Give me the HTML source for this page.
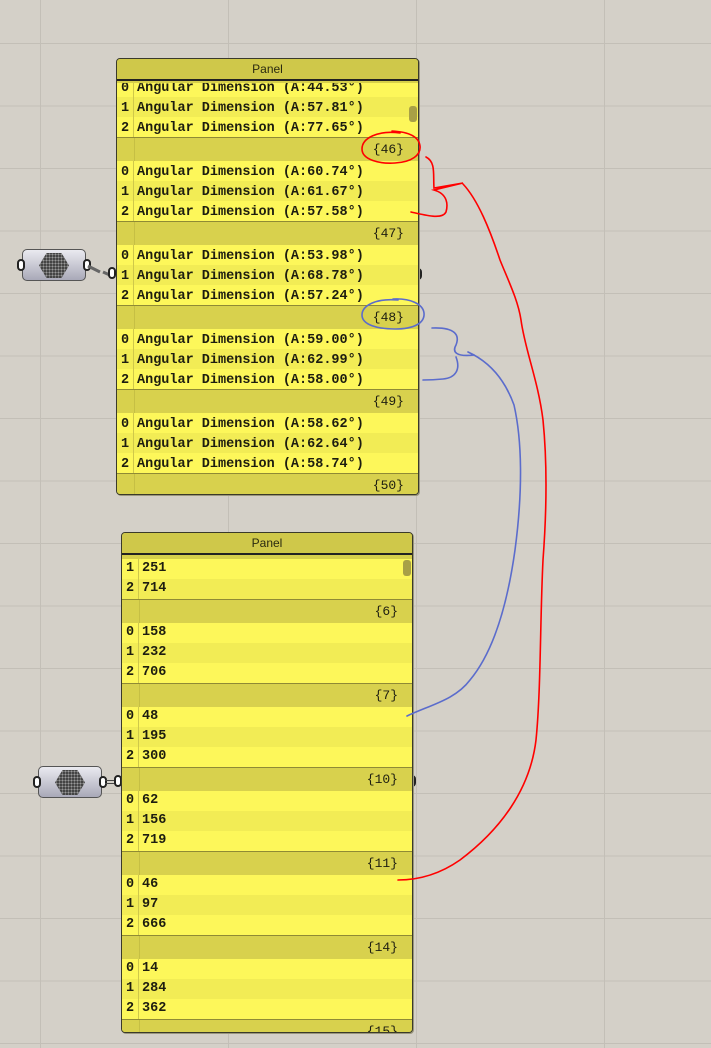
<!DOCTYPE html>
<html><head><meta charset="utf-8"><style>
*{margin:0;padding:0;box-sizing:border-box}
body{width:711px;height:1048px;overflow:hidden;background:#d4d0c8;position:relative;font-family:"Liberation Mono",monospace}
.grid{position:absolute;inset:0;background-image:linear-gradient(to right,#c3bfb7 1px,transparent 1px),linear-gradient(to bottom,#c3bfb7 1px,transparent 1px);background-size:188px 62.5px;background-position:40px 43px}
.panel{position:absolute;border:1px solid #3a3a2a;border-radius:4px;background:#d6cf4a;overflow:hidden;box-shadow:1px 1px 0 #9a967e}
.hdr{height:22px;background:#cfc84a;border-bottom:2px solid #222;font:12px "Liberation Sans",sans-serif;color:#2a2a10;text-align:center;line-height:20px}
.body{position:absolute;left:0;right:0;bottom:0;overflow:hidden}
.in{position:absolute;left:0;right:0}
.r{height:20px;line-height:20px;font-size:13.5px;font-weight:bold;color:#1d1d10;white-space:pre;display:flex}
.p1 .r{line-height:23px}
.r.a{background:#fdf75a}.r.b{background:#f2ec55}
.r i{font-style:normal;width:17px;text-align:center;border-right:1px solid #cfc84a;flex:none}
.r span{padding-left:3px}
.g{height:24px;line-height:24px;background:#d8d14d;border-top:1px solid #8f8a35;text-align:right;padding-right:14px;font-size:13px;color:#1d1d10;position:relative}
.g:before{content:"";position:absolute;left:17px;top:0;bottom:0;border-left:1px solid #c6bf44}
.sb{position:absolute;width:8px;height:16px;border-radius:3px;background:#a8a046}
.comp{position:absolute;width:64px;height:32px;border:1px solid #555;border-radius:5px;background:linear-gradient(#eaeaf0,#a9a9b8)}
.hex{position:absolute;left:16px;top:3px;width:30px;height:25px;background:#555;clip-path:polygon(25% 0,75% 0,100% 50%,75% 100%,25% 100%,0 50%);background-image:radial-gradient(#999 1px,transparent 1px);background-size:3px 3px;background-color:#444}
.port{position:absolute;width:8px;height:12px;border:2px solid #222;border-radius:6px;background:#fff}
</style></head><body>
<div class="grid"></div>

<div class="comp" style="left:22px;top:249px"><div class="hex"></div></div>
<div class="port" style="left:17px;top:259px"></div>
<div class="port" style="left:83px;top:259px"></div>
<div class="comp" style="left:38px;top:766px"><div class="hex"></div></div>
<div class="port" style="left:33px;top:776px"></div>
<div class="port" style="left:99px;top:776px"></div>
<div style="position:absolute;left:105px;top:780px;width:12px;height:4px;border-top:1px solid #444;border-bottom:1px solid #444"></div>
<svg style="position:absolute;left:0;top:0" width="711" height="1048"><path d="M88 266 L100 272 M103 272 L112 276" stroke="#666" stroke-width="3" fill="none"/></svg>
<div class="port" style="left:108px;top:267px"></div>
<div class="port" style="left:414px;top:268px"></div>
<div class="port" style="left:114px;top:775px"></div>
<div class="port" style="left:408px;top:775px"></div>

<div class="panel p1" style="left:116px;top:58px;width:303px;height:437px">
<div class="hdr">Panel</div>
<div class="body" style="top:24px"><div class="in" style="top:-6px">
<div class="r a"><i>0</i><span>Angular Dimension (A:44.53°)</span></div>
<div class="r b"><i>1</i><span>Angular Dimension (A:57.81°)</span></div>
<div class="r a"><i>2</i><span>Angular Dimension (A:77.65°)</span></div>
<div class="g">{46}</div>
<div class="r a"><i>0</i><span>Angular Dimension (A:60.74°)</span></div>
<div class="r b"><i>1</i><span>Angular Dimension (A:61.67°)</span></div>
<div class="r a"><i>2</i><span>Angular Dimension (A:57.58°)</span></div>
<div class="g">{47}</div>
<div class="r a"><i>0</i><span>Angular Dimension (A:53.98°)</span></div>
<div class="r b"><i>1</i><span>Angular Dimension (A:68.78°)</span></div>
<div class="r a"><i>2</i><span>Angular Dimension (A:57.24°)</span></div>
<div class="g">{48}</div>
<div class="r a"><i>0</i><span>Angular Dimension (A:59.00°)</span></div>
<div class="r b"><i>1</i><span>Angular Dimension (A:62.99°)</span></div>
<div class="r a"><i>2</i><span>Angular Dimension (A:58.00°)</span></div>
<div class="g">{49}</div>
<div class="r a"><i>0</i><span>Angular Dimension (A:58.62°)</span></div>
<div class="r b"><i>1</i><span>Angular Dimension (A:62.64°)</span></div>
<div class="r a"><i>2</i><span>Angular Dimension (A:58.74°)</span></div>
<div class="g">{50}</div>
</div></div>
<div class="sb" style="left:292px;top:47px"></div>
</div>

<div class="panel" style="left:121px;top:532px;width:292px;height:501px">
<div class="hdr">Panel</div>
<div class="body" style="top:24px"><div class="in" style="top:2px">
<div class="r a"><i>1</i><span>251</span></div>
<div class="r b"><i>2</i><span>714</span></div>
<div class="g">{6}</div>
<div class="r a"><i>0</i><span>158</span></div>
<div class="r b"><i>1</i><span>232</span></div>
<div class="r a"><i>2</i><span>706</span></div>
<div class="g">{7}</div>
<div class="r a"><i>0</i><span>48</span></div>
<div class="r b"><i>1</i><span>195</span></div>
<div class="r a"><i>2</i><span>300</span></div>
<div class="g">{10}</div>
<div class="r a"><i>0</i><span>62</span></div>
<div class="r b"><i>1</i><span>156</span></div>
<div class="r a"><i>2</i><span>719</span></div>
<div class="g">{11}</div>
<div class="r a"><i>0</i><span>46</span></div>
<div class="r b"><i>1</i><span>97</span></div>
<div class="r a"><i>2</i><span>666</span></div>
<div class="g">{14}</div>
<div class="r a"><i>0</i><span>14</span></div>
<div class="r b"><i>1</i><span>284</span></div>
<div class="r a"><i>2</i><span>362</span></div>
<div class="g">{15}</div>
</div></div>
<div class="sb" style="left:281px;top:27px"></div>
</div>

<svg style="position:absolute;left:0;top:0" width="711" height="1048" fill="none" stroke-width="1.6" stroke-linecap="round">
<g stroke="#f00">
<path d="M400 133 C378 130 362 138 362 149 C362 160 380 164 395 163 C412 162 421 155 420 146 C419 137 410 132 392 131"/>
<path d="M426 157 C436 162 433 175 434 188 L463 183 L434 190 C448 194 448 205 446 212 C442 220 425 215 411 212"/>
<path d="M463 184 C478 200 490 230 500 260 C508 280 518 300 521 320 C525 350 538 380 543 420 C548 470 546 520 543 560 C540 620 541 690 536 740 C530 790 500 830 460 860 C440 874 420 880 398 880"/>
</g>
<g stroke="#5b6ccc">
<path d="M398 300 C375 298 362 306 362 315 C362 325 378 329 395 329 C414 329 425 323 424 313 C423 304 410 298 393 299"/>
<path d="M432 328 C455 327 460 335 456 345 C452 352 456 357 474 355 M456 357 C461 370 455 378 443 379 C433 380 428 380 423 380"/>
<path d="M468 352 C490 362 505 380 514 405 C522 440 523 490 515 550 C508 600 495 650 470 680 C455 700 430 705 407 716"/>
</g>
</svg>
</body></html>
